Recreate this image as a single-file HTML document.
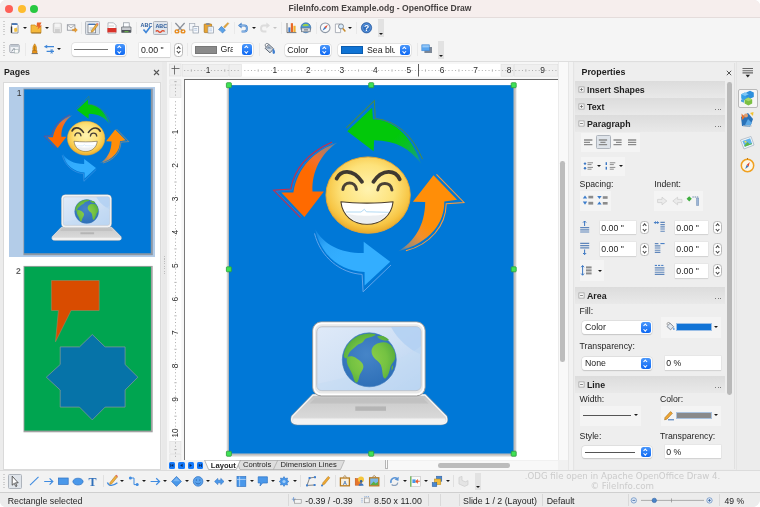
<!DOCTYPE html>
<html>
<head>
<meta charset="utf-8">
<title>FileInfo.com Example.odg - OpenOffice Draw</title>
<style>
html,body{margin:0;padding:0;}
body{width:760px;height:507px;overflow:hidden;background:#ffffff;font-family:"Liberation Sans",sans-serif;font-size:8.8px;color:#1e1e1e;position:relative;}
#win{position:absolute;left:0;top:0;width:760px;height:507px;overflow:hidden;border-radius:6px 6px 8px 6px;background:#ececec;will-change:transform;}
.abs{position:absolute;}
div{box-sizing:border-box;}
#titlebar{left:0;top:0;width:760px;height:18px;background:#f6eeed;border-bottom:1px solid #e4dcdb;}
#title{left:288.6px;top:0;height:18px;line-height:17px;white-space:nowrap;font-weight:bold;font-size:8.55px;color:#454141;}
.tl{position:absolute;top:5px;width:8px;height:8px;border-radius:50%;}
#tbbg{left:0;top:18px;width:760px;height:44px;background:#f5f5f5;border-bottom:1px solid #dedede;}
#pages{left:0;top:62px;width:164px;height:408px;background:#ececec;}
#pageshdr{left:4px;top:66.5px;font-weight:bold;font-size:8.8px;color:#1e1e1e;}
#pageslist{left:3px;top:82px;width:158px;height:388px;background:#fff;border:1px solid #dadada;}
.lbl{position:absolute;white-space:nowrap;font-size:8.7px;color:#1e1e1e;line-height:10px;margin-top:0.3px;}
.hdr{position:absolute;left:575px;width:150px;height:17px;background:linear-gradient(#dcdcdc,#e9e9e9);}
.hdr b{position:absolute;left:12px;top:3.6px;font-size:8.8px;line-height:10px;color:#1e1e1e;white-space:nowrap;}
.hdr i{position:absolute;left:3.5px;top:4.5px;width:6px;height:6px;border:1px solid #8f8f8f;background:#f6f6f6;}
.hdr i:before{content:"";position:absolute;left:1px;top:1.5px;width:2px;height:1px;background:#555;}
.hdr i.plus:after{content:"";position:absolute;left:1.5px;top:1px;width:1px;height:2px;background:#555;}
.hdr u{position:absolute;right:3.4px;top:10.6px;width:6.4px;height:1px;background:repeating-linear-gradient(90deg,#7a7a7a 0,#7a7a7a 1.2px,transparent 1.2px,transparent 2.6px);}
.inp{position:absolute;background:#fff;border:none;box-shadow:0 0 0 0.5px #e0e0e0,0 0.8px 0.6px #c8c8c8;font-size:8.75px;line-height:12px;padding-left:1.7px;white-space:nowrap;overflow:hidden;color:#222;}
.dd{position:absolute;background:#fff;border-radius:3px;box-shadow:0 0 0 0.5px #d6d6d6,0 0.5px 1px rgba(0,0,0,0.22);font-size:8.75px;white-space:nowrap;overflow:hidden;color:#222;}
.step{position:absolute;width:10px;height:10.6px;border-radius:2.5px;background:linear-gradient(#4a97fb,#0d68f3);}
.step:before{content:"";position:absolute;left:3.1px;top:2.2px;width:2.6px;height:2.6px;border-left:1.1px solid #fff;border-top:1.1px solid #fff;transform:rotate(45deg);box-sizing:border-box;}
.step:after{content:"";position:absolute;left:3.1px;top:5.6px;width:2.6px;height:2.6px;border-right:1.1px solid #fff;border-bottom:1.1px solid #fff;transform:rotate(45deg);box-sizing:border-box;}
.spin{position:absolute;width:8.6px;height:13.4px;border-radius:3.5px;background:#fff;border:0.8px solid #b9b9b9;}
.spin:before{content:"";position:absolute;left:1.8px;top:2.3px;width:3.2px;height:3.2px;border-left:0.9px solid #444;border-top:0.9px solid #444;transform:rotate(45deg);box-sizing:border-box;}
.spin:after{content:"";position:absolute;left:1.8px;top:6.2px;width:3.2px;height:3.2px;border-right:0.9px solid #444;border-bottom:0.9px solid #444;transform:rotate(45deg);box-sizing:border-box;}
.box{position:absolute;background:#f4f4f4;}
.pressed{position:absolute;background:#dfe4ea;border:1px solid #aeb4bc;border-radius:1.5px;}
.arr{position:absolute;width:0;height:0;border-left:2px solid transparent;border-right:2px solid transparent;border-top:2.4px solid #1a1a1a;margin-left:-0.4px;}
#drawtb{left:0;top:470px;width:760px;height:22px;background:#f2f2f2;border-top:1px solid #dcdcdc;}
#status{left:0;top:492px;width:760px;height:15px;background:#ececec;border-top:1px solid #cfcfcf;}
.st{position:absolute;top:496px;font-size:8.8px;line-height:10px;white-space:nowrap;color:#1e1e1e;}
.sep{position:absolute;top:494px;width:1px;height:12px;background:#d9d9d9;}
.wm{position:absolute;font-family:"DejaVu Sans","Liberation Sans",sans-serif;font-size:8.3px;color:#cbcbcb;white-space:nowrap;line-height:10px;}
.tab{position:absolute;top:460px;height:10px;font-size:7.6px;line-height:10px;white-space:nowrap;color:#1e1e1e;}
.nav{position:absolute;top:461.8px;width:6.4px;height:7.2px;border-radius:1.5px;background:#1479fb;}
</style>
</head>
<body>
<div id="win">
<div id="titlebar" class="abs"></div>
<div class="tl" style="left:5px;background:#fe5f57;"></div><div class="tl" style="left:17.6px;background:#febc2e;"></div><div class="tl" style="left:30.2px;background:#28c840;"></div>
<div id="title" class="abs">FileInfo.com Example.odg - OpenOffice Draw</div>
<div id="tbbg" class="abs"></div>
<div id="pages" class="abs"></div>
<div id="pageshdr" class="abs">Pages</div>
<svg class="abs" style="left:152.5px;top:68.5px" width="7" height="7" viewBox="0 0 7 7"><path d="M1 1L6 6M6 1L1 6" stroke="#555" stroke-width="1.1" fill="none"/></svg>
<div id="pageslist" class="abs"></div>
<div class="abs" style="left:8.5px;top:87px;width:146px;height:169.5px;background:#b3cce8;"></div>
<div class="abs lbl" style="left:16.8px;top:88.2px;font-size:8.6px;color:#333;">1</div>
<div class="abs lbl" style="left:16px;top:265.5px;font-size:8.6px;font-weight:bold;color:#666;">2</div>
<div class="abs" style="left:161.5px;top:62px;width:5.5px;height:408px;background:#e9e9e9;"></div><div class="abs" style="left:163.6px;top:256px;width:1px;height:20px;background:repeating-linear-gradient(#bdbdbd 0,#bdbdbd 1px,transparent 1px,transparent 2.5px);"></div>
<div class="abs" style="left:167px;top:62px;width:401px;height:408px;background:#f6f6f6;"></div>
<div class="abs" style="left:183.6px;top:79.2px;width:374.4px;height:381px;background:#fff;border-top:1px solid #6a6a6a;border-left:1px solid #7a7a7a;"></div>
<div class="abs" style="left:558px;top:62px;width:9.6px;height:399px;background:#f9f9f9;border-left:1px solid #ebebeb;"></div>
<div class="abs" style="left:560.3px;top:161px;width:4.6px;height:201px;border-radius:2.3px;background:#bdbdbd;"></div>
<div class="abs" style="left:167px;top:460px;width:401px;height:10px;background:#f1f1f1;"></div>
<div class="abs" style="left:388px;top:461px;width:170px;height:9px;background:#f8f8f8;"></div>
<div class="abs" style="left:385px;top:460px;width:3.4px;height:9px;background:#fafafa;border:1px solid #b5b5b5;border-top:none;"></div>
<div class="abs" style="left:437.8px;top:463.4px;width:72.6px;height:4.4px;border-radius:2.2px;background:#bcbcbc;"></div>
<svg class="abs" style="left:0;top:0;pointer-events:none" width="760" height="507" viewBox="0 0 760 507" font-family="Liberation Sans, sans-serif" font-size="8.4" fill="#2a2a2a">
<rect x="169.5" y="64" width="11.5" height="12" fill="#efefef" stroke="#dcdcdc" stroke-width="0.6"/>
<path d="M171.5 68.5H179.5M174.5 65.5V74.5" stroke="#555" stroke-width="0.8" fill="none"/>
<rect x="182" y="64" width="376" height="12.5" fill="#ffffff"/>
<rect x="182.3" y="64.3" width="46.2" height="11.9" fill="#efefef" stroke="#dedede" stroke-width="0.6"/>
<rect x="229.3" y="64.3" width="12" height="11.9" fill="#efefef" stroke="#dedede" stroke-width="0.6"/>
<rect x="501" y="64.3" width="12.6" height="11.9" fill="#efefef" stroke="#dedede" stroke-width="0.6"/>
<rect x="514.4" y="64.3" width="43.4" height="11.9" fill="#efefef" stroke="#dedede" stroke-width="0.6"/>
<path d="M184.63 70V71M187.98 70V71M191.32 69.4V71.6M194.67 70V71M198.01 70V71M201.36 70V71M204.70 70V71M211.40 70V71M214.74 70V71M218.09 70V71M221.43 70V71M224.78 69.4V71.6M228.12 70V71M231.47 70V71M234.81 70V71M238.16 70V71M244.84 70V71M248.19 70V71M251.53 70V71M254.88 70V71M258.23 69.4V71.6M261.57 70V71M264.92 70V71M268.26 70V71M271.61 70V71M278.30 70V71M281.64 70V71M284.99 70V71M288.33 70V71M291.68 69.4V71.6M295.02 70V71M298.37 70V71M301.71 70V71M305.06 70V71M311.75 70V71M315.09 70V71M318.44 70V71M321.78 70V71M325.12 69.4V71.6M328.47 70V71M331.81 70V71M335.16 70V71M338.50 70V71M345.19 70V71M348.54 70V71M351.88 70V71M355.23 70V71M358.57 69.4V71.6M361.92 70V71M365.26 70V71M368.61 70V71M371.96 70V71M378.64 70V71M381.99 70V71M385.34 70V71M388.68 70V71M392.03 69.4V71.6M395.37 70V71M398.72 70V71M402.06 70V71M405.41 70V71M412.10 70V71M415.44 70V71M418.79 70V71M422.13 70V71M425.48 69.4V71.6M428.82 70V71M432.17 70V71M435.51 70V71M438.86 70V71M445.55 70V71M448.89 70V71M452.24 70V71M455.58 70V71M458.93 69.4V71.6M462.27 70V71M465.62 70V71M468.96 70V71M472.31 70V71M479.00 70V71M482.34 70V71M485.69 70V71M489.03 70V71M492.38 69.4V71.6M495.72 70V71M499.06 70V71M502.41 70V71M505.75 70V71M512.45 70V71M515.79 70V71M519.13 70V71M522.48 70V71M525.83 69.4V71.6M529.17 70V71M532.51 70V71M535.86 70V71M539.21 70V71M545.89 70V71M549.24 70V71M552.59 70V71M555.93 70V71" stroke="#9a9a9a" stroke-width="0.8" fill="none"/>
<text x="208.1" y="72.9" text-anchor="middle">1</text>
<text x="274.9" y="72.9" text-anchor="middle">1</text>
<text x="308.4" y="72.9" text-anchor="middle">2</text>
<text x="341.9" y="72.9" text-anchor="middle">3</text>
<text x="375.3" y="72.9" text-anchor="middle">4</text>
<text x="408.8" y="72.9" text-anchor="middle">5</text>
<text x="442.2" y="72.9" text-anchor="middle">6</text>
<text x="475.7" y="72.9" text-anchor="middle">7</text>
<text x="509.1" y="72.9" text-anchor="middle">8</text>
<text x="542.5" y="72.9" text-anchor="middle">9</text>
<path d="M418.5 64V76.5" stroke="#333" stroke-width="0.8"/>
<rect x="169.5" y="79.5" width="11.8" height="381" fill="#ffffff"/>
<rect x="169.8" y="79.8" width="11.2" height="4.6" fill="#efefef" stroke="#dedede" stroke-width="0.6"/>
<rect x="169.8" y="85.6" width="11.2" height="12" fill="#efefef" stroke="#dedede" stroke-width="0.6"/>
<rect x="169.8" y="441.3" width="11.2" height="12" fill="#efefef" stroke="#dedede" stroke-width="0.6"/>
<rect x="169.8" y="454.5" width="11.2" height="6" fill="#efefef" stroke="#dedede" stroke-width="0.6"/>
<path d="M174.4 81.68H176.6M175 85.02H176M175 88.37H176M175 91.71H176M175 95.06H176M175 101.75H176M175 105.09H176M175 108.44H176M175 111.78H176M174.4 115.12H176.6M175 118.47H176M175 121.82H176M175 125.16H176M175 128.50H176M175 135.19H176M175 138.54H176M175 141.88H176M175 145.23H176M174.4 148.58H176.6M175 151.92H176M175 155.27H176M175 158.61H176M175 161.96H176M175 168.65H176M175 171.99H176M175 175.34H176M175 178.68H176M174.4 182.03H176.6M175 185.37H176M175 188.72H176M175 192.06H176M175 195.41H176M175 202.10H176M175 205.44H176M175 208.79H176M175 212.13H176M174.4 215.48H176.6M175 218.82H176M175 222.17H176M175 225.51H176M175 228.86H176M175 235.55H176M175 238.89H176M175 242.24H176M175 245.58H176M174.4 248.93H176.6M175 252.27H176M175 255.62H176M175 258.96H176M175 262.31H176M175 269.00H176M175 272.34H176M175 275.69H176M175 279.03H176M174.4 282.38H176.6M175 285.72H176M175 289.07H176M175 292.41H176M175 295.75H176M175 302.45H176M175 305.79H176M175 309.14H176M175 312.48H176M174.4 315.83H176.6M175 319.17H176M175 322.51H176M175 325.86H176M175 329.21H176M175 335.90H176M175 339.24H176M175 342.59H176M175 345.93H176M174.4 349.27H176.6M175 352.62H176M175 355.97H176M175 359.31H176M175 362.65H176M175 369.35H176M175 372.69H176M175 376.04H176M175 379.38H176M174.4 382.73H176.6M175 386.07H176M175 389.41H176M175 392.76H176M175 396.11H176M175 402.80H176M175 406.14H176M175 409.49H176M175 412.83H176M174.4 416.18H176.6M175 419.52H176M175 422.87H176M175 426.21H176M175 429.56H176M175 436.25H176M175 439.59H176M175 442.94H176M175 446.28H176M174.4 449.62H176.6M175 452.97H176M175 456.32H176" stroke="#9a9a9a" stroke-width="0.8" fill="none"/>
<text transform="translate(177.9,131.9) rotate(-90)" text-anchor="middle">1</text>
<text transform="translate(177.9,165.3) rotate(-90)" text-anchor="middle">2</text>
<text transform="translate(177.9,198.8) rotate(-90)" text-anchor="middle">3</text>
<text transform="translate(177.9,232.2) rotate(-90)" text-anchor="middle">4</text>
<text transform="translate(177.9,265.6) rotate(-90)" text-anchor="middle">5</text>
<text transform="translate(177.9,299.1) rotate(-90)" text-anchor="middle">6</text>
<text transform="translate(177.9,332.6) rotate(-90)" text-anchor="middle">7</text>
<text transform="translate(177.9,366.0) rotate(-90)" text-anchor="middle">8</text>
<text transform="translate(177.9,399.5) rotate(-90)" text-anchor="middle">9</text>
<text transform="translate(177.9,432.9) rotate(-90)" text-anchor="middle">10</text>
</svg>
<svg class="abs" style="left:0;top:0;pointer-events:none" width="760" height="507" viewBox="0 0 760 507">
<defs>
<radialGradient id="gsm" cx="0.5" cy="0.42" r="0.58">
<stop offset="0" stop-color="#fff3b0"/><stop offset="0.55" stop-color="#fde27a"/><stop offset="0.85" stop-color="#f7c544"/><stop offset="1" stop-color="#e9a92a"/>
</radialGradient>
<linearGradient id="gred" gradientUnits="userSpaceOnUse" x1="310" y1="172" x2="337" y2="142">
<stop offset="0" stop-color="#ff6a00"/><stop offset="0.35" stop-color="#f07030"/><stop offset="0.8" stop-color="#a8806c" stop-opacity="0.9"/><stop offset="1" stop-color="#8a8a8a" stop-opacity="0.3"/>
</linearGradient>
<linearGradient id="gor" gradientUnits="userSpaceOnUse" x1="428" y1="226" x2="400" y2="251">
<stop offset="0" stop-color="#ff8e08"/><stop offset="0.35" stop-color="#f09030"/><stop offset="0.8" stop-color="#a88a6c" stop-opacity="0.9"/><stop offset="1" stop-color="#8a8a8a" stop-opacity="0.3"/>
</linearGradient>
<linearGradient id="ggr" gradientUnits="userSpaceOnUse" x1="396" y1="136" x2="421" y2="163">
<stop offset="0" stop-color="#02c80a"/><stop offset="0.35" stop-color="#08c024"/><stop offset="0.8" stop-color="#14a868" stop-opacity="0.9"/><stop offset="1" stop-color="#1a90a0" stop-opacity="0.4"/>
</linearGradient>
<linearGradient id="gbl" gradientUnits="userSpaceOnUse" x1="340" y1="258" x2="315" y2="230">
<stop offset="0" stop-color="#33aeff"/><stop offset="0.5" stop-color="#30a8fa"/><stop offset="1" stop-color="#1f90ea" stop-opacity="0.6"/>
</linearGradient>
<linearGradient id="gscr" x1="0" y1="0" x2="1" y2="1">
<stop offset="0" stop-color="#dfeaf8"/><stop offset="0.5" stop-color="#cfe0f5"/><stop offset="1" stop-color="#b4d0f0"/>
</linearGradient>
<linearGradient id="gbase" x1="0" y1="0" x2="0" y2="1">
<stop offset="0" stop-color="#c2c2c2"/><stop offset="0.3" stop-color="#cfcfcf"/><stop offset="0.75" stop-color="#d8d8d8"/><stop offset="1" stop-color="#e8e8e8"/>
</linearGradient>
<radialGradient id="gland" gradientUnits="userSpaceOnUse" cx="369" cy="360" r="30"><stop offset="0" stop-color="#8fd04a"/><stop offset="0.6" stop-color="#74c242"/><stop offset="1" stop-color="#4fa83c"/></radialGradient>
<radialGradient id="gglobe" cx="0.45" cy="0.4" r="0.6">
<stop offset="0" stop-color="#4685c8"/><stop offset="1" stop-color="#2f70b8"/>
</radialGradient>
<g id="art">
<rect x="228.9" y="85.2" width="284.6" height="368.3" fill="#0078d7"/>
<!-- green arrow -->
<path d="M347.3 131.3 L372.1 107.7 L372.9 119.2 C392 119.5 410 133 421.4 164.1 C410 148.5 396 140.5 374.1 140.2 L373.6 151.2 Z" fill="url(#ggr)"/>
<path d="M346.4 127.9 L374.4 100.7 L375.2 118.4 C395 120.5 412 134 422.5 159.1" fill="none" stroke="#4a8a48" stroke-width="1.05"/>
<!-- red arrow -->
<path d="M337.7 142.5 C315 150.5 297.5 166.5 293.4 192.6 L281.3 192.6 L304.4 217 L323.9 191.4 L312.5 191.4 C311.5 172 321 153 337.7 142.5 Z" fill="url(#gred)"/>
<path d="M332 142.1 C310 152 294.5 167 290.7 189.1 L273.5 190.3 L300.5 217.7" fill="none" stroke="#d02c44" stroke-width="1.05"/>
<path d="M333 143.1 C311.5 153 296 168 292.2 190.1 L276.5 191.3 L301.5 216.7" fill="none" stroke="#5a78d8" stroke-width="0.5" opacity="0.8"/>
<!-- orange arrow -->
<path d="M433.5 175.3 L457.1 199.7 L444.3 201.5 C444.5 223 430 243 398.4 251.2 C414 242 425 226 425.2 202.1 L412.9 201.7 Z" fill="url(#gor)"/>
<path d="M436.5 174.4 L464 202.5 L446.2 203.8 C446 226 430 244.5 405.9 250.8" fill="none" stroke="#ff9c38" stroke-width="1.05"/>
<!-- blue arrow -->
<path d="M315.3 229.5 C324 245 342 253.5 363.7 253.1 L363.7 241.8 L390.2 261.8 L364.6 285.5 L364.6 272.1 C341 270.5 321.5 257 315.3 229.5 Z" fill="url(#gbl)"/>
<path d="M314.5 233.4 C320.5 257 340 273 362.1 274.4 L363.1 291.8 L391 265" fill="none" stroke="#62a4ea" stroke-width="1"/>
<!-- smiley -->
<ellipse cx="368.1" cy="195.1" rx="42.2" ry="38.2" fill="url(#gsm)" stroke="#e9a632" stroke-width="0.9"/>
<path d="M336.6 178.6 C340.5 170.2 352.5 168 362 181.8" fill="none" stroke="#3f3830" stroke-width="3.8" stroke-linecap="round"/>
<path d="M373.4 181.8 C383 168 395.5 170.2 399.7 179.2" fill="none" stroke="#3f3830" stroke-width="3.8" stroke-linecap="round"/>
<path d="M342.9 189.4 C343.6 180.8 355.6 180.8 356.4 189.4" fill="none" stroke="#4a4136" stroke-width="3.1" stroke-linecap="round"/>
<path d="M377.8 189.9 C378.6 181.3 391 181.3 391.9 189.9" fill="none" stroke="#4a4136" stroke-width="3.1" stroke-linecap="round"/>
<path d="M340.9 201.8 C355 203.6 379 203.6 393.1 201.8 C391.5 216 381 224.3 367 224.3 C353 224.3 342.5 216 340.9 201.8 Z" fill="#ffffff" stroke="#4a3c2c" stroke-width="1.1" stroke-linejoin="round"/>
<path d="M347 213.5 C352 221 360 223.4 367 223.4 C374 223.4 382 221 387 213.5 C380 216.5 354 216.5 347 213.5 Z" fill="#e6eaee" opacity="0.8"/>
<path d="M346 212 L361 212 L364.4 209.3 L366.4 211.8 L389 212.3" fill="none" stroke="#9fd0f0" stroke-width="0.8"/>
<!-- laptop -->
<path d="M313 395 L425 395 L446.2 416.5 Q448.8 424 441 424 L297.5 424 Q289.8 424 292.2 416.5 Z" fill="none" stroke="#8f949a" stroke-width="2.6" stroke-linejoin="round" opacity="0.75"/>
<path d="M313 395 L425 395 L446.2 416.5 Q448.8 424 441 424 L297.5 424 Q289.8 424 292.2 416.5 Z" fill="url(#gbase)" stroke="#f7f7f7" stroke-width="1.3" stroke-linejoin="round"/>
<path d="M315 398.2 L423 398.2 L428.5 403.4 L309.5 403.4 Z" fill="#bdbdbd" opacity="0.75"/>
<rect x="355.3" y="406.4" width="30.7" height="4.4" fill="#b5b5b5"/>
<path d="M293.5 418.5 L445 418.5 Q447 423.2 441 423.2 L297.5 423.2 Q291.5 423.2 293.5 418.5 Z" fill="#f4f4f4" opacity="0.9"/>
<rect x="312.7" y="321.9" width="112.4" height="74" rx="8.5" ry="8.5" fill="#e9e9e9" stroke="#9c9c9c" stroke-width="1"/>
<rect x="314.2" y="323.4" width="109.4" height="71" rx="7.2" ry="7.2" fill="none" stroke="#ffffff" stroke-width="1.6"/>
<rect x="316.8" y="326.8" width="104.2" height="63.8" rx="5" ry="5" fill="url(#gscr)" stroke="#b9bcc2" stroke-width="0.9"/>
<path d="M391 327 C398 340 410 350 421 354.5 L421 331.8 Q421 326.8 416 326.8 Z" fill="#b2d0f2" opacity="0.85"/><path d="M316.8 384 C352 377 402 362 421 346 L421 385.6 Q421 390.6 416 390.6 L321.8 390.6 Q316.8 390.6 316.8 385.6 Z" fill="#c4dbf5" opacity="0.45"/>
<circle cx="369.3" cy="359.8" r="27" fill="url(#gglobe)" stroke="#3a78bc" stroke-width="0.6"/>
<g fill="url(#gland)">
<path d="M343.6 356 C344.5 347 350 340 358 336 C364 333.2 371 332.6 376 334.4 C373 337.2 369.5 336.8 366 338.6 C363.5 340 363.8 342.6 360.5 343.4 C357.5 344 356 346.4 353.4 348.4 C350.4 350.8 348.6 352.6 347.8 356.2 C347 358.6 345 359.6 343.6 356 Z"/>
<path d="M346.8 357.6 C349.4 355.6 353 356 356.4 358.2 C360 360.6 363.4 363 363.4 366.4 C363.4 370 360.4 372.4 359.4 376 C358.6 379.4 358 382.6 356.4 382.6 C354.6 382.6 353.8 378.6 352.6 375 C351 370.4 347.6 366.8 346.8 362 Z"/>
<path d="M371.6 350 C372.4 345.4 377.6 342.4 383 342.2 C387.4 342 390.4 344 392.6 347.4 C395 351 396.2 355.6 394.8 359.6 C393.6 362.8 391 364 390.2 367.6 C389.4 371.6 388.4 376 385.4 378.6 C383 379 382.6 374.6 382.2 370.6 C381.8 366.4 380.6 363.4 377.6 361 C374.4 358.4 371 355 371.6 350 Z"/>
<path d="M377 336.6 C380.6 334.6 386 336.2 389 340 C385.4 341.4 380 340.6 377 336.6 Z"/>
<path d="M392.6 365 C393.6 366.6 393 369.6 391.6 370.6 C391.2 368.6 391.6 366.4 392.6 365 Z"/>
</g>
</g>
</defs>
<!-- page shadow -->
<rect x="226.6" y="85.2" width="290" height="371.6" fill="#b0b0b0" opacity="0.35"/><rect x="227.6" y="85.2" width="288" height="370.3" fill="#909090" opacity="0.45"/>
<use href="#art"/>
<rect x="23.4" y="88.6" width="129.4" height="166.6" fill="#8d97a3"/>
<g transform="translate(24.2,89.4) scale(0.44483) translate(-228.9,-85.2)"><use href="#art"/></g>
<rect x="23.5" y="265.9" width="129.2" height="166.4" fill="#a2a2a2"/>
<rect x="24.4" y="266.8" width="126.5" height="163.8" fill="#00a550"/>
<path d="M51.4 280.5H99.2V310.5H71.1L55.5 341.8L58.4 310.5H51.4Z" fill="#d94c00" stroke="#a08a70" stroke-width="0.5"/>
<path d="M60.2 346.9H79.5L92.3 334.5L105.1 346.9H125.1V364.5L137.9 377.2L125.1 390L125.1 407.1H105.1L92.3 419.9L79.5 407.1H60.2V390L46.3 377.2L60.2 364.5Z" fill="#0673a8" stroke="#8d98a0" stroke-width="0.7"/>
<rect x="226.4" y="82.7" width="5" height="5" rx="0.8" fill="#3fe255" stroke="#2e9a3a" stroke-width="0.8"/>
<rect x="368.7" y="82.7" width="5" height="5" rx="0.8" fill="#3fe255" stroke="#2e9a3a" stroke-width="0.8"/>
<rect x="511.2" y="82.7" width="5" height="5" rx="0.8" fill="#3fe255" stroke="#2e9a3a" stroke-width="0.8"/>
<rect x="226.4" y="266.8" width="5" height="5" rx="0.8" fill="#3fe255" stroke="#2e9a3a" stroke-width="0.8"/>
<rect x="511.2" y="266.8" width="5" height="5" rx="0.8" fill="#3fe255" stroke="#2e9a3a" stroke-width="0.8"/>
<rect x="226.4" y="451.2" width="5" height="5" rx="0.8" fill="#3fe255" stroke="#2e9a3a" stroke-width="0.8"/>
<rect x="368.7" y="451.2" width="5" height="5" rx="0.8" fill="#3fe255" stroke="#2e9a3a" stroke-width="0.8"/>
<rect x="511.2" y="451.2" width="5" height="5" rx="0.8" fill="#3fe255" stroke="#2e9a3a" stroke-width="0.8"/>
</svg>
<div class="abs" style="left:570px;top:62px;width:190px;height:408px;background:#ececec;"></div>
<div class="abs" style="left:567.6px;top:62px;width:6.4px;height:408px;background:#f2f2f2;border-left:1px solid #e6e6e6;border-right:1px solid #e4e4e4;"></div>
<div class="abs" style="left:575px;top:63px;width:160px;height:406px;background:#eeeeee;border-right:1px solid #e0e0e0;"></div>
<div class="abs" style="left:581.5px;top:67.2px;font-weight:bold;font-size:8.9px;line-height:10px;white-space:nowrap;">Properties</div>
<svg class="abs" style="left:725.5px;top:69.5px" width="6" height="6" viewBox="0 0 6 6"><path d="M0.8 0.8L5.2 5.2M5.2 0.8L0.8 5.2" stroke="#555" stroke-width="1" fill="none"/></svg>
<div class="hdr" style="top:81px"><svg style="position:absolute;left:3px;top:5.1px" width="8" height="8" viewBox="0 0 8 8"><rect x="0.9" y="0.9" width="5.2" height="5.2" fill="#f8f8f8" stroke="#999" stroke-width="0.7"/><path d="M2.1 3.5H4.9M3.5 2.1V4.9" stroke="#555" stroke-width="0.7"/></svg><b>Insert Shapes</b></div>
<div class="hdr" style="top:98px"><svg style="position:absolute;left:3px;top:5.1px" width="8" height="8" viewBox="0 0 8 8"><rect x="0.9" y="0.9" width="5.2" height="5.2" fill="#f8f8f8" stroke="#999" stroke-width="0.7"/><path d="M2.1 3.5H4.9M3.5 2.1V4.9" stroke="#555" stroke-width="0.7"/></svg><b>Text</b><u></u></div>
<div class="hdr" style="top:115px"><svg style="position:absolute;left:3px;top:5.1px" width="8" height="8" viewBox="0 0 8 8"><rect x="0.9" y="0.9" width="5.2" height="5.2" fill="#f8f8f8" stroke="#999" stroke-width="0.7"/><path d="M2.1 3.5H4.9" stroke="#555" stroke-width="0.7"/></svg><b>Paragraph</b><u></u></div>
<div class="hdr" style="top:287px"><svg style="position:absolute;left:3px;top:5.1px" width="8" height="8" viewBox="0 0 8 8"><rect x="0.9" y="0.9" width="5.2" height="5.2" fill="#f8f8f8" stroke="#999" stroke-width="0.7"/><path d="M2.1 3.5H4.9" stroke="#555" stroke-width="0.7"/></svg><b>Area</b><u></u></div>
<div class="hdr" style="top:376px"><svg style="position:absolute;left:3px;top:5.1px" width="8" height="8" viewBox="0 0 8 8"><rect x="0.9" y="0.9" width="5.2" height="5.2" fill="#f8f8f8" stroke="#999" stroke-width="0.7"/><path d="M2.1 3.5H4.9" stroke="#555" stroke-width="0.7"/></svg><b>Line</b><u></u></div>
<div class="abs" style="left:727.2px;top:82px;width:4.8px;height:313px;border-radius:2.4px;background:#b9b9b9;"></div>
<div class="box" style="left:581px;top:133.2px;width:59px;height:19.2px;"></div>
<div class="pressed" style="left:596.2px;top:135px;width:14.4px;height:14.3px;"></div>
<svg class="abs" style="left:580px;top:132px" width="62" height="22" viewBox="580 132 62 22"><g stroke="#8a8a8a" stroke-width="1.3" fill="none"><path d="M584 140H592.4M584 142.3H590M584 144.6H592.4"/><path d="M598.8 140H607.1M600.4 142.3H605.5M598.8 144.6H607.1"/><path d="M613.5 140H621.6M616 142.3H621.6M613.5 144.6H621.6"/><path d="M628 140H636.2M628 142.3H636.2M628 144.6H636.2"/></g></svg>
<div class="box" style="left:581px;top:156.6px;width:44.4px;height:19.7px;"></div>
<svg class="abs" style="left:580px;top:156px" width="48" height="22" viewBox="580 156 48 22"><g fill="#3d78c4"><circle cx="585" cy="163.6" r="1.2"/><circle cx="585" cy="168.2" r="1.2"/><rect x="605.6" y="162.2" width="1.4" height="2.8"/><rect x="605.6" y="166.8" width="1.4" height="2.8"/></g><g stroke="#808080" stroke-width="0.9"><path d="M587.5 162.8H593M587.5 164.6H591.5M587.5 167.4H593M587.5 169.2H591.5M609.8 162.8H615.3M609.8 164.6H613.8M609.8 167.4H615.3M609.8 169.2H613.8"/></g></svg>
<div class="arr" style="left:597.2px;top:164.6px"></div>
<div class="arr" style="left:618.9px;top:164.6px"></div>
<div class="lbl" style="left:579.6px;top:178.3px;">Spacing:</div>
<div class="lbl" style="left:654.3px;top:178.3px;">Indent:</div>
<div class="box" style="left:579.9px;top:191.4px;width:30.7px;height:19.6px;"></div>
<div class="box" style="left:654.4px;top:191px;width:48.8px;height:19.6px;"></div>
<svg class="abs" style="left:579px;top:190px" width="126" height="22" viewBox="579 190 126 22"><g fill="#3a7ccc"><path d="M582.8 198.6L585 195.6L587.2 198.6Z"/><path d="M582.8 201.6L585 204.8L587.2 201.6Z"/><path d="M597.2 196L599.4 199L601.6 196Z"/><path d="M597.2 204.6L599.4 201.6L601.6 204.6Z"/></g><g fill="#8c8c8c"><rect x="588.4" y="195.8" width="4.8" height="2.6"/><rect x="588.4" y="201.8" width="4.8" height="2.8"/><rect x="602.8" y="196.2" width="4.8" height="2.6"/><rect x="602.8" y="202" width="4.8" height="2.6"/></g><g fill="#ebebeb" stroke="#c6c6c6" stroke-width="0.6"><path d="M657.6 199.4H662V197.2L666.8 201L662 204.8V202.6H657.6Z"/><path d="M682 199.4H677.6V197.2L672.8 201L677.6 204.8V202.6H682Z"/></g><path d="M686.6 198.8L689.2 196.2L691.8 198.8L689.2 201.4Z" fill="#3fae3f"/><path d="M692.4 197H698.2" stroke="#6a87ad" stroke-width="1.1" fill="none" stroke-dasharray="1.4 0.8"/><rect x="696.4" y="198" width="2.4" height="7.6" fill="#9db6d6" stroke="#6a87ad" stroke-width="0.4"/></svg>
<div class="inp" style="left:599.6px;top:220.8px;width:36.2px;height:13.6px;line-height:14.8px">0.00 "</div>
<div class="spin" style="left:640.3px;top:220.9px"></div>
<div class="inp" style="left:674.6px;top:220.8px;width:33.8px;height:13.6px;line-height:14.8px">0.00 "</div>
<div class="spin" style="left:713.0px;top:220.9px"></div>
<div class="inp" style="left:599.6px;top:242.4px;width:36.2px;height:13.6px;line-height:14.8px">0.00 "</div>
<div class="spin" style="left:640.3px;top:242.5px"></div>
<div class="inp" style="left:674.6px;top:242.4px;width:33.8px;height:13.6px;line-height:14.8px">0.00 "</div>
<div class="spin" style="left:713.0px;top:242.5px"></div>
<div class="inp" style="left:674.6px;top:264.0px;width:33.8px;height:13.6px;line-height:14.8px">0.00 "</div>
<div class="spin" style="left:713.0px;top:264.1px"></div>
<div class="box" style="left:580px;top:260.4px;width:24px;height:20.4px;"></div>
<div class="arr" style="left:597.9px;top:270.0px"></div>
<svg class="abs" style="left:578px;top:216px" width="92" height="66" viewBox="578 216 92 66"><g stroke="#3a76c2" stroke-width="1" fill="none"><path d="M584.6 221V226M583 222.6L584.6 221L586.2 222.6"/><path d="M584.6 249.5V254.5M583 253L584.6 254.6L586.2 253"/><path d="M582.6 265.6V275.2M581.2 267.2L582.6 265.6L584 267.2M581.2 273.6L582.6 275.2L584 273.6"/><path d="M654.4 222.6H658.6M655.6 221.4L654.4 222.6L655.6 223.8M657.4 221.4L658.6 222.6L657.4 223.8"/><path d="M660.4 243.6H664.6"/><path d="M654.8 265.4H664.4" stroke-dasharray="2.2 1"/></g><g stroke="#5f86bb" stroke-width="1.15" fill="none"><path d="M580.2 227.6H589.2M580.2 229.8H589.2M580.2 232H589.2"/><path d="M580.2 243.4H589.2M580.2 245.6H589.2M580.2 247.8H589.2"/><path d="M660.4 222.4H664.8M660.4 224.6H664.8M660.4 226.8H664.8M660.4 229H664.8M660.4 231.2H664.8"/><path d="M654.8 243.6H658.4M654.8 245.8H660.4M654.8 248H660.4M654.8 250.2H660.4M654.8 252.4H660.4"/><path d="M654.8 267.8H664.4M654.8 270H664.4M654.8 272.2H664.4M654.8 274.4H664.4"/></g><g fill="#8c8c8c"><rect x="586" y="266.4" width="5.6" height="2"/><rect x="586" y="269.4" width="5.6" height="2"/><rect x="586" y="272.4" width="5.6" height="2"/></g></svg>
<div class="lbl" style="left:579.6px;top:305.3px;">Fill:</div>
<div class="dd" style="left:582.4px;top:321px;width:69.3px;height:12.9px;line-height:12.9px;padding-left:2.6px;">Color</div>
<div class="step" style="left:640.8px;top:322.2px"></div>
<div class="box" style="left:660.5px;top:317.2px;width:60.6px;height:20.6px;"></div>
<div class="abs" style="left:675.6px;top:323.3px;width:36px;height:7.6px;background:#1173d6;border:1px solid #9cbfe6;"></div>
<svg class="abs" style="left:664.5px;top:321px" width="11" height="11" viewBox="0 0 11 11"><path d="M2 5.5L5 2.2L8.6 5.6L5.6 8.8Z" fill="#dfe6ee" stroke="#6c7684" stroke-width="0.8"/><path d="M5 2.2C3 0.5 1.5 2 2.4 4" fill="none" stroke="#777" stroke-width="0.7"/><path d="M8.8 6.2C9.8 7.6 9.8 9 8.9 9C8 9 8 7.6 8.8 6.2Z" fill="#3c86d8"/></svg>
<div class="arr" style="left:714.8px;top:326.2px"></div>
<div class="lbl" style="left:579.6px;top:340.6px;">Transparency:</div>
<div class="dd" style="left:582.4px;top:357px;width:69.3px;height:12.9px;line-height:12.9px;padding-left:2.6px;">None</div>
<div class="step" style="left:640.8px;top:358.2px"></div>
<div class="inp" style="left:664.6px;top:356.2px;width:56.6px;height:14.2px;line-height:15.4px">0 %</div>
<div class="lbl" style="left:579.6px;top:394.0px;">Width:</div>
<div class="lbl" style="left:660.0px;top:394.0px;">Color:</div>
<div class="box" style="left:580px;top:405.5px;width:61.3px;height:20.6px;"></div>
<div class="abs" style="left:583px;top:414.8px;width:47.5px;height:1px;background:#555;"></div>
<div class="arr" style="left:634.7px;top:414.3px"></div>
<div class="box" style="left:660.5px;top:405.5px;width:60.6px;height:20.6px;"></div>
<div class="abs" style="left:675.6px;top:411.8px;width:36px;height:7.6px;background:#8a8a8a;border:1px solid #a9c1dd;"></div>
<svg class="abs" style="left:662.5px;top:409px" width="12" height="12" viewBox="0 0 12 12"><path d="M2 8.6L7.6 2.6L9.4 4.3L3.8 10.2L1.6 10.8Z" fill="#f0a836" stroke="#a36c1a" stroke-width="0.6"/><path d="M5 10.8H11" stroke="#3b6fb5" stroke-width="1"/></svg>
<div class="arr" style="left:714.8px;top:414.3px"></div>
<div class="lbl" style="left:579.6px;top:430.8px;">Style:</div>
<div class="lbl" style="left:660.0px;top:430.8px;">Transparency:</div>
<div class="dd" style="left:582.4px;top:446px;width:69.3px;height:12.2px;"></div>
<div class="abs" style="left:585px;top:451.6px;width:49.5px;height:1px;background:#555;"></div>
<div class="step" style="left:640.8px;top:446.9px"></div>
<div class="inp" style="left:664.6px;top:444.7px;width:56.6px;height:13.8px;line-height:15.0px">0 %</div>
<div class="abs" style="left:736px;top:62px;width:24px;height:408px;background:#ececec;border-left:1px solid #e4e4e4;"></div>
<svg class="abs" style="left:740px;top:64px" width="16" height="16" viewBox="0 0 16 16"><path d="M2.5 4.5H13M2.5 6.7H13M2.5 8.9H13" stroke="#666" stroke-width="1.1"/><path d="M5.6 10.8L10 10.8L7.8 13.4Z" fill="#222"/></svg>
<div class="abs" style="left:738.4px;top:88.6px;width:19.6px;height:19.4px;background:#f6f6f6;border:1px solid #b9b9b9;border-radius:2px;"></div>
<svg class="abs" style="left:736.2px;top:86px" width="23" height="92" viewBox="0 0 23 92"><g><path d="M5.2 8.2L9 6.4L12.8 8.2V12.6L9 14.4L5.2 12.6Z" fill="#35a0e8"/><path d="M10.2 6.6L14 4.8L17.8 6.6V11L14 12.8L10.2 11Z" fill="#2e90dd"/><path d="M8.6 13.4L12.4 11.6L16.2 13.4V17.6L12.4 19.4L8.6 17.6Z" fill="#7bc043"/><path d="M5 13.8L8 12.6V16.8L5 15.6Z" fill="#4aa3e0"/><path d="M12.4 11.6L16.2 13.4L12.4 15.2L8.6 13.4Z" fill="#a5d86c"/><path d="M9 6.4L12.8 8.2L9 10L5.2 8.2Z" fill="#7cc6f5"/></g><g><path d="M5 31L12 27L17 33L14 41L6 40Z" fill="#2a72b8"/><path d="M5.5 27.5L9 31L6 34Z" fill="#e8702a"/><path d="M14 27L17.5 26L17 30Z" fill="#f2c230"/><circle cx="10" cy="29.5" r="2" fill="#e2a070"/><path d="M12 33L16 37L13 41L9 39Z" fill="#5aa8e6"/><path d="M7 40H16" stroke="#c9c9c9" stroke-width="1"/></g><g><path d="M4.5 54L15 50.5L18 59L8 63Z" fill="#f4f8fc" stroke="#a9b6c4" stroke-width="0.8"/><path d="M6.3 55L14.2 52.3L16.2 58L8.8 60.8Z" fill="#62b4ec"/><path d="M8.3 59.5L11.5 56L13.5 58L15.6 57.2L16.2 58L8.8 60.8Z" fill="#5cb648"/><circle cx="9.5" cy="55.8" r="1" fill="#f7e04a"/></g><g><circle cx="11.5" cy="79.5" r="6.2" fill="#fdf6e6" stroke="#f0a020" stroke-width="1.5"/><path d="M13.8 76L12.6 80.4L10.6 79Z" fill="#e0452a"/><path d="M9.2 83L10.6 79L12.6 80.4Z" fill="#3b78c4"/><path d="M11.5 72V73.6" stroke="#c07a10" stroke-width="1"/></g></svg>
<div class="abs" style="left:0;top:18.5px;width:385px;height:19.5px;background:#f5f5f5;"></div>
<div class="abs" style="left:0;top:39.5px;width:445px;height:21.5px;background:#f5f5f5;"></div>
<div class="abs" style="left:2.5px;top:21px;width:2px;height:14px;background:repeating-linear-gradient(#cfcfcf 0,#cfcfcf 1px,transparent 1px,transparent 2.6px);"></div>
<div class="abs" style="left:2.5px;top:42px;width:2px;height:14px;background:repeating-linear-gradient(#cfcfcf 0,#cfcfcf 1px,transparent 1px,transparent 2.6px);"></div>
<div class="abs" style="left:378.2px;top:19px;width:6px;height:18.4px;background:#e2e2e2;"></div>
<div class="arr" style="left:379.6px;top:33.2px"></div>
<div class="abs" style="left:438px;top:40.5px;width:6.4px;height:18.6px;background:#e2e2e2;"></div>
<div class="arr" style="left:439.6px;top:54.6px"></div>
<div class="pressed" style="left:85.2px;top:21.2px;width:14.4px;height:14.2px;"></div>
<div class="pressed" style="left:153.4px;top:21.2px;width:14.2px;height:13.8px;"></div>
<div class="abs" style="left:81.3px;top:22px;width:1px;height:12px;background:#e9e9e9;"></div>
<div class="abs" style="left:136.0px;top:22px;width:1px;height:12px;background:#e9e9e9;"></div>
<div class="abs" style="left:170.5px;top:22px;width:1px;height:12px;background:#e9e9e9;"></div>
<div class="abs" style="left:233.5px;top:22px;width:1px;height:12px;background:#e9e9e9;"></div>
<div class="abs" style="left:281.0px;top:22px;width:1px;height:12px;background:#e9e9e9;"></div>
<div class="abs" style="left:315.5px;top:22px;width:1px;height:12px;background:#e9e9e9;"></div>
<div class="abs" style="left:356.0px;top:22px;width:1px;height:12px;background:#e9e9e9;"></div>
<div class="abs" style="left:24.5px;top:43px;width:1px;height:13px;background:#e9e9e9;"></div>
<div class="abs" style="left:186.5px;top:43px;width:1px;height:13px;background:#e9e9e9;"></div>
<div class="abs" style="left:258.5px;top:43px;width:1px;height:13px;background:#e9e9e9;"></div>
<div class="abs" style="left:416.5px;top:43px;width:1px;height:13px;background:#e9e9e9;"></div>
<div class="arr" style="left:23.5px;top:27.0px"></div>
<div class="arr" style="left:44.9px;top:27.0px"></div>
<div class="arr" style="left:252.1px;top:27.0px"></div>
<div class="arr" style="left:348.7px;top:27.0px"></div>
<div class="arr" style="left:273.4px;top:27px;border-top-color:#c4c4c4"></div>
<div class="arr" style="left:57.4px;top:48.0px"></div>
<svg class="abs" style="left:0;top:18px" width="390" height="21" viewBox="0 18 390 21">
<path d="M11.5 23.5H16L18 25.5V33H11.5Z" fill="#fdfdfd" stroke="#7a7f88" stroke-width="0.8"/><path d="M12 23.2H17.5V25H12Z" fill="#4a79b8"/><path d="M14 28.5L17 27.5L17.5 31.5L14.5 32Z" fill="#f3c242"/><path d="M11.5 26.5V32.8" stroke="#333" stroke-width="1.4"/>
<path d="M31 25H35L36 26.3H41V32.8H31Z" fill="#f5b93c" stroke="#c98a1a" stroke-width="0.7"/><path d="M37 22.5L41.5 22.5L40 25.5L42 25.5L37.5 29.5L38.5 26.5L36.5 26.5Z" fill="#e8632a"/><path d="M31.5 33H41" stroke="#8a5a10" stroke-width="0.8"/>
<rect x="53.3" y="23.3" width="8.2" height="9.4" rx="0.8" fill="#e6e6e6" stroke="#bdbdbd" stroke-width="0.8"/><rect x="55" y="23.5" width="4.8" height="3.4" fill="#f4f4f4"/><rect x="55" y="29" width="4.8" height="3" fill="#cfcfcf"/>
<rect x="67.3" y="24.8" width="7.6" height="5.4" fill="#f8f8f8" stroke="#8a8f98" stroke-width="0.8"/><path d="M67.5 25L71 28L74.8 25" fill="none" stroke="#8a8f98" stroke-width="0.7"/><path d="M72.5 29.3H75V27.8L77.4 30L75 32.3V30.8H72.5Z" fill="#f0a030" stroke="#c07818" stroke-width="0.4"/>
<rect x="88" y="24.5" width="7.6" height="8.4" fill="#fbfbfb" stroke="#7a7f88" stroke-width="0.8"/><path d="M88.5 24.3H95.2" stroke="#3b6fb5" stroke-width="1.2"/><path d="M89.5 28H93M89.5 30H92" stroke="#9aa" stroke-width="0.7"/><path d="M91.5 30.5L96.4 23.8L98 25L93.2 31.6L91.2 32.2Z" fill="#f0b040" stroke="#9c6a18" stroke-width="0.5"/><path d="M96.4 23.8L98 25L98.6 24L97.2 23Z" fill="#e66"/>
<path d="M108 22.8H113.5L116 25.3V33.2H108Z" fill="#fdfdfd" stroke="#9a9fa8" stroke-width="0.7"/><rect x="107.4" y="28" width="9" height="4.4" fill="#d9322a"/><path d="M109 26H114" stroke="#bbb" stroke-width="0.7"/>
<rect x="123.4" y="22.8" width="5.8" height="4.4" fill="#fbfdff" stroke="#8c949e" stroke-width="0.7"/><path d="M121.6 27H131V32.4H121.6Z" fill="#c9ccd1" stroke="#5f646c" stroke-width="0.7"/><rect x="121.8" y="30" width="9" height="2.4" fill="#4c5057"/><rect x="124.5" y="31.2" width="4" height="1" fill="#6fc04a"/>
<text x="140.6" y="27" font-family="Liberation Sans, sans-serif" font-size="5.4" font-weight="bold" fill="#2a5a9a">ABC</text><path d="M143.5 29.5L146 32.5L150.3 26.8" fill="none" stroke="#3f86d8" stroke-width="1.7"/>
<text x="155.4" y="28" font-family="Liberation Sans, sans-serif" font-size="5.4" font-weight="bold" fill="#2a5a9a">ABC</text><path d="M155.8 31.5Q157.2 29.7 158.6 31.5T161.4 31.5T164.6 31.5" fill="none" stroke="#e0482a" stroke-width="1.3"/>
<path d="M175.4 23L182.6 31M184.6 23L177.4 31" stroke="#8a8f98" stroke-width="1.2" fill="none"/><ellipse cx="177" cy="31.4" rx="1.9" ry="1.5" fill="none" stroke="#e88a1a" stroke-width="1.4"/><ellipse cx="183" cy="31.4" rx="1.9" ry="1.5" fill="none" stroke="#e88a1a" stroke-width="1.4"/>
<rect x="189.6" y="23.6" width="5.2" height="6.4" fill="#f3f6fa" stroke="#a2aab6" stroke-width="0.7"/><rect x="193" y="26.4" width="5.6" height="6.6" fill="#f8fafd" stroke="#8e98a6" stroke-width="0.7"/><path d="M194.2 28.5H197.2M194.2 30.2H197.2" stroke="#9fb6d4" stroke-width="0.7"/>
<rect x="204.2" y="24" width="7.4" height="8.6" rx="0.6" fill="#e8a432" stroke="#a86e14" stroke-width="0.7"/><rect x="206.2" y="23" width="3.4" height="2" fill="#8a8f98"/><rect x="208" y="26.8" width="5.4" height="6.2" fill="#fafcff" stroke="#8e98a6" stroke-width="0.7"/><path d="M209.2 29H212.2M209.2 30.8H212.2" stroke="#9fb6d4" stroke-width="0.7"/>
<path d="M227.8 22.6L228.8 23.6L224.8 28L223.6 26.8Z" fill="#e8a83a" stroke="#a8741a" stroke-width="0.4"/><path d="M221.4 26.4L225.4 30L222.6 33L218.6 29.6Z" fill="#5aa2e8" stroke="#2f6fb8" stroke-width="0.6"/><path d="M219.6 30.5L221.6 32.2" stroke="#d6e8fa" stroke-width="0.6"/>
<path d="M239.4 25.6H244.4C247.8 25.6 247.8 31.6 244.4 31.6H241.6" fill="none" stroke="#4a86cc" stroke-width="2"/><path d="M238 25.6L241.6 22.6V28.6Z" fill="#4a86cc"/><path d="M239.4 25.6H244.4C247.8 25.6 247.8 31.6 244.4 31.6H241.6" fill="none" stroke="#a9ccf0" stroke-width="0.7"/>
<path d="M268.6 25.6H263.6C260.2 25.6 260.2 31.6 263.6 31.6H266.4" fill="none" stroke="#dcdcdc" stroke-width="2"/><path d="M270 25.6L266.4 22.6V28.6Z" fill="#dcdcdc"/>
<path d="M287 23V32.6H296.4" fill="none" stroke="#555" stroke-width="0.8"/><rect x="288.4" y="27.4" width="2" height="4.6" fill="#3c78c8"/><rect x="290.8" y="23.2" width="2.2" height="8.8" fill="#e8682a"/><rect x="293.4" y="25.8" width="2.2" height="6.2" fill="#f0b030"/>
<circle cx="305.8" cy="27.8" r="5" fill="#4a98d8" stroke="#2a62a0" stroke-width="0.6"/><path d="M302.4 25.4C304 23.6 307.4 23.4 309 25.2C307.6 26.6 304 26.8 302.4 25.4Z" fill="#9ad04a"/><rect x="301.6" y="28" width="8.6" height="3.8" fill="#d8dde4" stroke="#666c76" stroke-width="0.6"/><path d="M304 29.9H308" stroke="#555" stroke-width="0.8"/>
<circle cx="325.2" cy="27.8" r="4.8" fill="#f8fafc" stroke="#8e98a6" stroke-width="1.1"/><path d="M327.8 24.8L326 28.6L324.4 27Z" fill="#e0452a"/><path d="M322.4 30.8L324.4 27L326 28.6Z" fill="#3b78c4"/>
<path d="M335.4 24H339.4L340.6 25.2V32.6H335.4Z" fill="#fbfbfb" stroke="#9097a2" stroke-width="0.7"/><circle cx="341" cy="26.4" r="2.5" fill="#d8ebfb" stroke="#6d7580" stroke-width="0.8"/><path d="M342.8 28.4L345.4 31.4" stroke="#c88a2a" stroke-width="1.5"/>
<circle cx="366.5" cy="27.8" r="5.2" fill="#2f6ec0" stroke="#1d4f96" stroke-width="0.6"/><circle cx="366.5" cy="27.8" r="4" fill="none" stroke="#7eaee6" stroke-width="0.6"/><text x="366.5" y="31" text-anchor="middle" font-family="Liberation Sans, sans-serif" font-size="8.6" font-weight="bold" fill="#ffffff">?</text>
</svg>
<svg class="abs" style="left:0;top:39px" width="450" height="22" viewBox="0 39 450 22">
<rect x="9.8" y="44.6" width="9.4" height="8" rx="1" fill="#eef1f5" stroke="#8f96a2" stroke-width="0.8"/><rect x="10.5" y="45.2" width="8" height="1.6" fill="#b5bdc9"/><path d="M11.6 51.4L14 48.4L15.4 50.4" fill="none" stroke="#6e7682" stroke-width="0.8"/><rect x="14.6" y="49.6" width="3.8" height="3.4" fill="#fafafa" stroke="#9aa" stroke-width="0.5"/>
<path d="M33.2 50.8C32.2 48 33.4 45.6 34.7 43.8C36 45.6 37.2 48 36.2 50.8Z" fill="#f0a21e" stroke="#b8700c" stroke-width="0.6"/><path d="M34.7 46V50.5" stroke="#8a5208" stroke-width="0.6"/><rect x="32.4" y="50.8" width="4.6" height="2.4" fill="#e8941a" stroke="#a8650c" stroke-width="0.5"/><path d="M31.5 53.6H38" stroke="#555" stroke-width="0.7"/>
<path d="M44.6 46.6H54M46.6 51.4H54" stroke="#3f86d8" stroke-width="1.1"/><path d="M44.2 46.6L47.2 44.8V48.4Z" fill="#3f86d8"/><path d="M50.6 49.4L53.4 51.4L50.6 53.4M52.6 49.4L50 51.4L52.6 53.4" fill="none" stroke="#3f86d8" stroke-width="0.8"/>
<path d="M265.2 48.4L268.8 44.4L273.6 48.8L270 52.8Z" fill="#d3dae3" stroke="#4e5866" stroke-width="0.9"/><path d="M268.8 44.4C266.4 42.2 264.4 44.2 265.6 46.8" fill="none" stroke="#5a6472" stroke-width="0.8"/><path d="M266.4 48.6L268.8 46L272 48.8Z" fill="#7f93ab"/><path d="M273.2 48.6C275.6 50.6 275.4 54 273.8 54C272.2 54 272.2 51 273.2 48.6Z" fill="#3f7fd0"/>
<rect x="424.4" y="47" width="7.6" height="6" fill="#7c8796"/><rect x="421.8" y="44.8" width="7.6" height="6" fill="#5aa6f0" stroke="#3a82d0" stroke-width="0.5"/><rect x="422.4" y="45.4" width="6.4" height="2" fill="#a6d2fa" opacity="0.8"/>
</svg>
<div class="dd" style="left:71.8px;top:43.4px;width:53.8px;height:12.4px;"></div>
<div class="abs" style="left:73.6px;top:48.9px;width:34.6px;height:1.4px;background:#747474;"></div>
<div class="step" style="left:114.9px;top:44.3px"></div>
<div class="inp"  style="left:139.3px;top:43.0px;width:30.4px;height:13.8px;line-height:15.0px">0.00 "</div>
<div class="spin" style="left:174.2px;top:43.3px"></div>
<div class="dd" style="left:191.8px;top:43.4px;width:61.4px;height:12.4px;line-height:12.4px;padding-left:28.6px;"><span style="display:inline-block;width:12.6px;overflow:hidden;vertical-align:top;">Gray</span></div>
<div class="abs" style="left:195px;top:45.6px;width:22.2px;height:8.4px;background:#8a8a8a;border:0.6px solid #777;"></div>
<div class="step" style="left:242.4px;top:44.3px"></div>
<div class="dd" style="left:284.8px;top:43.8px;width:46.2px;height:12.2px;line-height:12.2px;padding-left:2.4px;">Color</div>
<div class="step" style="left:320.3px;top:44.6px"></div>
<div class="dd" style="left:338.4px;top:43.8px;width:72.8px;height:12.2px;line-height:12.2px;padding-left:28.6px;"><span style="display:inline-block;width:27.6px;overflow:hidden;vertical-align:top;">Sea blue</span></div>
<div class="abs" style="left:341px;top:45.6px;width:22.4px;height:8.6px;background:#0f73d4;border:0.6px solid #0a5cb0;"></div>
<div class="step" style="left:400.4px;top:44.6px"></div>
<div class="nav" style="left:168.8px"></div>
<div class="nav" style="left:178.2px"></div>
<div class="nav" style="left:187.6px"></div>
<div class="nav" style="left:197.0px"></div>
<svg class="abs" style="left:166px;top:460px" width="182" height="11" viewBox="166 460 182 11"><g fill="#0a2a5a" stroke="none"><path d="M173.4 463.8V467L171.2 465.4Z"/><rect x="170.4" y="463.8" width="0.8" height="3.2"/><path d="M182.6 463.8V467L180.2 465.4Z"/><path d="M189.6 463.8V467L192 465.4Z"/><path d="M198.8 463.8V467L201 465.4Z"/><rect x="201" y="463.8" width="0.8" height="3.2"/></g><path d="M236 460.5H344.5L340.5 469.5H240Z" fill="#dedede" stroke="#9a9a9a" stroke-width="0.6"/><path d="M273.4 469.5L277.6 460.5" stroke="#9a9a9a" stroke-width="0.6"/><path d="M204.6 460.2L208.6 469.5H236.2L240.4 460.2Z" fill="#ffffff" stroke="#8a8a8a" stroke-width="0.6"/></svg>
<div class="tab" style="left:210.8px;top:460.6px;font-size:7.6px;font-weight:bold;">Layout</div>
<div class="tab" style="left:243px;">Controls</div>
<div class="tab" style="left:280.6px;">Dimension Lines</div>
<div id="drawtb" class="abs"></div>
<div class="abs" style="left:2.5px;top:474px;width:2px;height:14px;background:repeating-linear-gradient(#cfcfcf 0,#cfcfcf 1px,transparent 1px,transparent 2.6px);"></div>
<div class="pressed" style="left:7.7px;top:474.1px;width:14.2px;height:14.5px;"></div>
<div class="abs" style="left:475px;top:473.3px;width:6.2px;height:16.6px;background:#e2e2e2;"></div>
<div class="arr" style="left:476.4px;top:486.0px"></div>
<div class="abs" style="left:102.6px;top:475px;width:1px;height:12px;background:#e0e0e0;"></div>
<div class="abs" style="left:300.0px;top:475px;width:1px;height:12px;background:#e0e0e0;"></div>
<div class="abs" style="left:335.0px;top:475px;width:1px;height:12px;background:#e0e0e0;"></div>
<div class="abs" style="left:384.0px;top:475px;width:1px;height:12px;background:#e0e0e0;"></div>
<div class="abs" style="left:453.0px;top:475px;width:1px;height:12px;background:#e0e0e0;"></div>
<div class="arr" style="left:120.8px;top:480.4px"></div>
<div class="arr" style="left:142.4px;top:480.4px"></div>
<div class="arr" style="left:163.7px;top:480.4px"></div>
<div class="arr" style="left:185.4px;top:480.4px"></div>
<div class="arr" style="left:206.8px;top:480.4px"></div>
<div class="arr" style="left:228.7px;top:480.4px"></div>
<div class="arr" style="left:250.0px;top:480.4px"></div>
<div class="arr" style="left:271.8px;top:480.4px"></div>
<div class="arr" style="left:293.1px;top:480.4px"></div>
<div class="arr" style="left:402.9px;top:480.4px"></div>
<div class="arr" style="left:424.3px;top:480.4px"></div>
<div class="arr" style="left:446.0px;top:480.4px"></div>
<svg class="abs" style="left:0;top:471px" width="490" height="21" viewBox="0 471 490 21">
<path d="M12.2 476.2V485.2L14.3 483.3L15.8 486.6L17 486L15.5 482.8H18.2Z" fill="#fff" stroke="#222" stroke-width="0.7"/>
<path d="M30 485.2L38.5 476.8" stroke="#3f8be0" stroke-width="1.1"/>
<path d="M44.2 481.5H52.4M49.6 478.4L52.8 481.5L49.6 484.6" fill="none" stroke="#3f8be0" stroke-width="1.2"/>
<rect x="58.4" y="478" width="9.8" height="6.4" fill="#4a98ea" stroke="#2f72c4" stroke-width="0.7"/>
<ellipse cx="78" cy="481.6" rx="5.1" ry="3.4" fill="#4a98ea" stroke="#2f72c4" stroke-width="0.7"/>
<text x="92.6" y="486.2" text-anchor="middle" font-family="Liberation Serif, serif" font-weight="bold" font-size="12" fill="#2f6fba">T</text>
<path d="M107.4 482.4C109 486.4 113 486.2 117.4 482.8" fill="none" stroke="#3f8be0" stroke-width="1.3"/><path d="M110 482.6L115.6 475.6L117.4 477L111.8 483.8L109.6 484.4Z" fill="#f0b040" stroke="#a8741a" stroke-width="0.5"/><path d="M115.6 475.6L117.4 477L118 476.2L116.4 474.8Z" fill="#e8605a"/>
<path d="M130.4 478H134V484.6H137.4" fill="none" stroke="#3f8be0" stroke-width="1"/><circle cx="130.4" cy="478" r="1.5" fill="#3f8be0"/><circle cx="137.2" cy="484.6" r="1.5" fill="#3f8be0"/>
<path d="M150.6 481.5H159M156.2 478.2L159.6 481.5L156.2 484.8" fill="none" stroke="#3f8be0" stroke-width="1.2"/>
<path d="M176.5 476.4L181.4 481.4L176.5 486.4L171.6 481.4Z" fill="#4a98ea" stroke="#2f72c4" stroke-width="0.7"/><path d="M176.5 477.6L180 481.2H173Z" fill="#8cc2f6" opacity="0.7"/>
<circle cx="198.1" cy="481.4" r="4.8" fill="#5aa2ec" stroke="#2f72c4" stroke-width="0.7"/><circle cx="196.4" cy="480" r="0.6" fill="#1d4f96"/><circle cx="199.8" cy="480" r="0.6" fill="#1d4f96"/><path d="M195.6 482.6C197 484.4 199.2 484.4 200.6 482.6" fill="none" stroke="#1d4f96" stroke-width="0.6"/>
<path d="M214.6 481.5L217.8 478.4V480.2H220.8V478.4L224 481.5L220.8 484.6V482.8H217.8V484.6Z" fill="#4a98ea" stroke="#2f72c4" stroke-width="0.6"/>
<rect x="237" y="476.6" width="8.8" height="9.8" fill="#4a98ea" stroke="#2f72c4" stroke-width="0.7"/><path d="M237 479.4H245.8M239.6 476.6V486.4" stroke="#cfe4fa" stroke-width="0.7"/>
<path d="M258.2 476.8H267.4V483H262.6L260 486L260.6 483H258.2Z" fill="#4a98ea" stroke="#2f72c4" stroke-width="0.7"/>
<path d="M288.9 481.5L287.0 482.8L287.5 485.0L285.3 484.5L284.0 486.4L282.7 484.5L280.5 485.0L281.0 482.8L279.1 481.5L281.0 480.2L280.5 478.0L282.7 478.5L284.0 476.6L285.3 478.5L287.5 478.0L287.0 480.2Z" fill="#4a98ea" stroke="#2f72c4" stroke-width="0.6"/><circle cx="284" cy="481.5" r="1.6" fill="#9fcdf8"/>
<path d="M307 485.4L309.6 478L315 477.2M307 485.4L314.6 485" fill="none" stroke="#555" stroke-width="0.7"/><g fill="#3f7fd0"><rect x="306" y="484.4" width="2" height="2"/><rect x="308.6" y="477" width="2" height="2"/><rect x="314" y="476.2" width="2" height="2"/><rect x="313.6" y="484" width="2" height="2"/></g>
<path d="M322 485.6L323 482.6L328.2 476.4L329.8 477.8L324.6 484.2Z" fill="#f0a830" stroke="#a8741a" stroke-width="0.5"/><circle cx="322" cy="485.4" r="1" fill="#3f7fd0"/>
<rect x="340.4" y="478" width="9" height="7.8" fill="#f6efe0" stroke="#b87a1e" stroke-width="1.3"/><text x="344.9" y="484.6" text-anchor="middle" font-family="Liberation Sans, sans-serif" font-weight="bold" font-size="5.4" fill="#3c6fb4">A</text><path d="M343.2 477.2L344.9 475.6L346.6 477.2" fill="none" stroke="#8a5a12" stroke-width="0.7"/>
<rect x="355.2" y="478.6" width="6" height="6.6" fill="#e8762a" stroke="#b85214" stroke-width="0.5"/><circle cx="361" cy="479.6" r="3" fill="#f4c63c"/><path d="M358.6 485.8C358.6 482.4 363.6 482.4 363.6 485.8Z" fill="#3c78c4"/><circle cx="361.1" cy="481.4" r="1.3" fill="#2f5f9e"/>
<rect x="369.6" y="477.8" width="9.2" height="8" fill="#7ab8e8" stroke="#b87a1e" stroke-width="1.3"/><path d="M370.4 485L373.6 481.6L375.6 483.4L378 481.8V485Z" fill="#5aae42"/><path d="M372.4 477L374.2 475.6L376 477" fill="none" stroke="#8a5a12" stroke-width="0.7"/>
<path d="M391 483C390 478.6 394.6 476.4 397.4 478.8" fill="none" stroke="#5a94d6" stroke-width="1.6"/><path d="M398.8 476.8L398.4 481L394.6 479.6Z" fill="#5a94d6"/><path d="M391.6 484.4C394 486.4 397.4 485.4 397.8 482.6" fill="none" stroke="#8aa0bc" stroke-width="1.3"/>
<rect x="411" y="476.6" width="9.4" height="9.8" fill="#fafafa" stroke="#b5b5b5" stroke-width="0.5"/><path d="M410.8 476.2V486.8" stroke="#5aae42" stroke-width="1.1"/><rect x="412.4" y="479.4" width="3.2" height="3.6" fill="#4a98ea"/><path d="M420 481.2H417.6V479.6L415.6 481.4L417.6 483.2V481.9" fill="#e8562a" stroke="#e8562a" stroke-width="0.7"/>
<rect x="436.4" y="476.2" width="5.4" height="5" fill="#4a88d0" stroke="#2a5a9a" stroke-width="0.5"/><rect x="434.4" y="479" width="6.4" height="5.6" fill="#f2bc3a" stroke="#b8861a" stroke-width="0.5"/><rect x="432.2" y="482.6" width="4.6" height="4" fill="#4a88d0" stroke="#2a5a9a" stroke-width="0.5"/>
<path d="M459 477.4L462 476.4V480.4L465.4 481.8L468 480.6V484.8L464.6 486.4L459 484Z" fill="#e4e4e4" stroke="#cdcdcd" stroke-width="0.7"/>
</svg>
<div class="wm" style="left:524.8px;top:471.2px;font-size:8.62px;">.ODG file open in Apache OpenOffice Draw 4.</div>
<div class="wm" style="left:590.4px;top:481px;font-size:8.7px;">© FileInfo.com</div>
<div id="status" class="abs"></div>
<div class="st" style="left:7.7px">Rectangle selected</div>
<div class="sep" style="left:287.5px"></div>
<div class="sep" style="left:428.4px"></div>
<div class="sep" style="left:439.5px"></div>
<div class="sep" style="left:458.9px"></div>
<div class="sep" style="left:542.4px"></div>
<div class="sep" style="left:627.6px"></div>
<div class="sep" style="left:719.0px"></div>
<svg class="abs" style="left:290px;top:493px" width="85" height="14" viewBox="290 493 85 14"><path d="M293.6 497V501.4M291.8 499.2H296" stroke="#5a8ed0" stroke-width="0.7"/><rect x="294.6" y="499.6" width="6.6" height="3.6" fill="#f4f4f4" stroke="#8a8a8a" stroke-width="0.6"/><rect x="364.6" y="498" width="4.6" height="4.8" fill="#f4f4f4" stroke="#8a8a8a" stroke-width="0.6"/><path d="M362 498V503M364.4 496.6H369.4" stroke="#5a8ed0" stroke-width="0.7" stroke-dasharray="1 0.8"/></svg>
<div class="st" style="left:305.3px">-0.39 / -0.39</div>
<div class="st" style="left:374px">8.50 x 11.00</div>
<div class="st" style="left:463.1px">Slide 1 / 2 (Layout)</div>
<div class="st" style="left:546.7px">Default</div>
<div class="st" style="left:724.6px;font-size:8.6px">49 %</div>
<svg class="abs" style="left:628px;top:494px" width="90" height="13" viewBox="628 494 90 13"><path d="M641 500.4H704" stroke="#9a9a9a" stroke-width="0.8"/><path d="M671.5 498.4V502.4" stroke="#8a8a8a" stroke-width="0.7"/><circle cx="633.8" cy="500.4" r="2.7" fill="#dfe9f6" stroke="#5f88be" stroke-width="0.7"/><path d="M632.4 500.4H635.2" stroke="#35629e" stroke-width="0.8"/><circle cx="709.5" cy="500.4" r="2.7" fill="#dfe9f6" stroke="#5f88be" stroke-width="0.7"/><path d="M708.1 500.4H710.9M709.5 499V501.8" stroke="#35629e" stroke-width="0.8"/><circle cx="654.3" cy="500.4" r="2.2" fill="#4a84c8" stroke="#2f62a4" stroke-width="0.6"/></svg>
</div>
</body>
</html>
